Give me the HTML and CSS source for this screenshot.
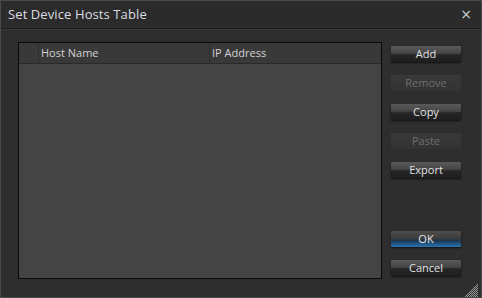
FILE: index.html
```html
<!DOCTYPE html>
<html>
<head>
<meta charset="utf-8">
<link rel="stylesheet" href="styles.css">
</head>
<body>
<div class="window">
  <div class="titlebar">
    <span class="title">Set Device Hosts Table</span>
    <span class="close">×</span>
  </div>
  <div class="body">
    <div class="table">
      <div class="thead">
        <div class="col col-idx"></div>
        <div class="col col-host">Host Name</div>
        <div class="col col-ip">IP Address</div>
      </div>
      <div class="tbody"></div>
    </div>
    <div class="buttons">
      <div class="btn">Add</div>
      <div class="btn disabled">Remove</div>
      <div class="btn">Copy</div>
      <div class="btn disabled">Paste</div>
      <div class="btn">Export</div>
      <div class="spacer"></div>
      <div class="btn primary">OK</div>
      <div class="btn">Cancel</div>
    </div>
  </div>
  <div class="grip">
    <svg width="14" height="14" viewBox="0 0 14 14">
      <defs>
        <pattern id="chk" width="2" height="2" patternUnits="userSpaceOnUse">
          <rect width="1" height="1" fill="#9a9a9a"/>
          <rect x="1" y="1" width="1" height="1" fill="#9a9a9a"/>
        </pattern>
      </defs>
      <polygon points="14,0 14,14 0,14" fill="url(#chk)"/>
    </svg>
  </div>
</div>
</body>
</html>
```
FILE: styles.css
```css
html, body {
  margin: 0;
  padding: 0;
  background: #2d2d2d;
}
.window {
  position: relative;
  width: 482px;
  height: 298px;
  box-sizing: border-box;
  border: 1px solid #4a4a4a;
  background: #2e2e2e;
  display: flex;
  flex-direction: column;
  font-family: "Open Sans", "Liberation Sans", sans-serif;
  overflow: hidden;
}
.titlebar {
  height: 27px;
  background: #2b2b2b;
  border-bottom: 1px solid #1c1c1c;
  display: flex;
  align-items: center;
  justify-content: space-between;
  padding: 0 9px 0 7px;
  flex: none;
}
.title {
  color: #dcdde2;
  font-size: 13px;
  letter-spacing: 0.1px;
  margin-top: -1px;
}
.close {
  color: #d0d0d0;
  font-size: 14px;
  font-family: "DejaVu Sans", sans-serif;
  margin-top: -2px;
}
.body {
  flex: 1;
  display: flex;
  border-top: 1px solid #383838;
  padding: 12px 20px 18px 17px;
  gap: 9px;
}
.table {
  flex: 1;
  border: 1px solid #0a0a0a;
  background: #444444;
  display: flex;
  flex-direction: column;
}
.thead {
  height: 20px;
  display: flex;
  background: #393939;
  border-bottom: 1px solid #2a2a2a;
  flex: none;
}
.col {
  font-size: 11px;
  color: #d2d2d6;
  line-height: 20px;
  padding-left: 2px;
  box-sizing: border-box;
}
.col-idx {
  width: 20px;
  border-right: 1px solid #2e2e2e;
}
.col-host {
  width: 171px;
  border-right: 1px solid #2e2e2e;
}
.col-ip {
  flex: 1;
}
.tbody {
  flex: 1;
}
.buttons {
  width: 70px;
  display: flex;
  flex-direction: column;
  gap: 13px;
  padding-top: 4px;
  padding-bottom: 3px;
}
.spacer {
  flex: 1;
  margin: -13px 0 0 0;
}
.btn {
  height: 16px;
  line-height: 16px;
  text-align: center;
  font-size: 11px;
  color: #e0e0e4;
  background: linear-gradient(#5a5a5a 0%, #454545 45%, #262626 55%, #1e1e1e 100%);
  box-shadow: 0 1px 2px #111;
  border-radius: 1px;
}
.btn.disabled {
  color: #6f6f6f;
  background: linear-gradient(#393939, #333333);
  box-shadow: none;
}
.btn.primary {
  color: #e6e6e6;
  background: linear-gradient(#4e4e4e 0%, #3d3d3d 45%, #1e3650 60%, #2a74b4 100%);
}
.grip {
  position: absolute;
  right: 3px;
  bottom: 3px;
  width: 14px;
  height: 14px;
}
```
